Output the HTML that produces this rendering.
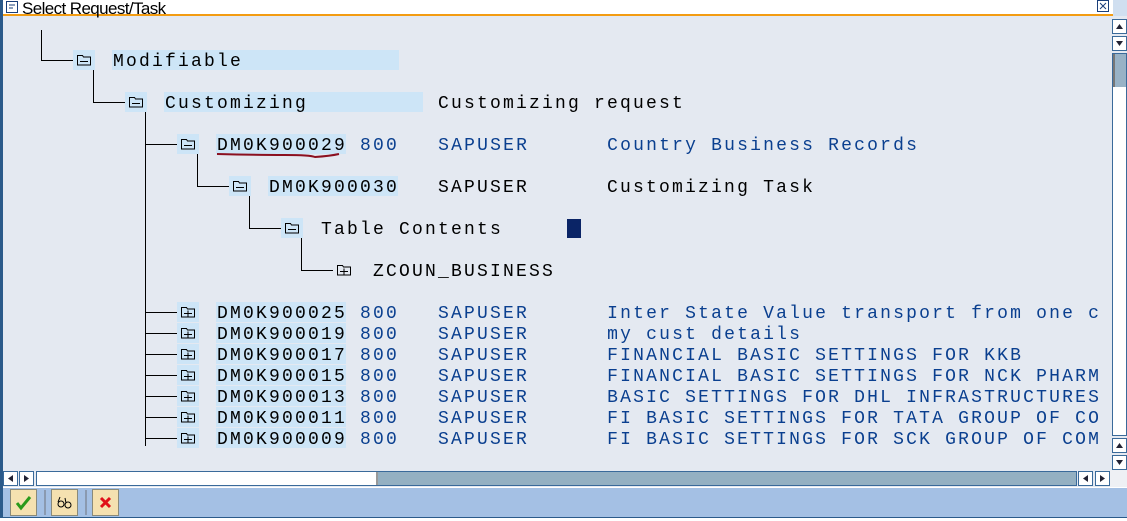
<!DOCTYPE html>
<html><head><meta charset="utf-8"><style>
*{margin:0;padding:0;box-sizing:border-box}
body{width:1127px;height:521px;overflow:hidden;background:#e4e9f1;position:relative;font-family:"Liberation Mono",monospace}
.t{position:absolute;font-size:18px;line-height:20px;letter-spacing:2.2px;white-space:pre;color:#000;margin-top:2px}
.b{color:#0a3f8f}
.hl{position:absolute;background:#cde5f7;height:20px}
.v{position:absolute;width:1px;background:#000}
.h{position:absolute;height:1px;background:#000}
.ic{position:absolute;width:22px;height:20px;background:#cde5f7}
.ic svg{position:absolute;left:3px;top:3px}
.btn{position:absolute;top:489px;width:27px;height:27px;background:#f5e1b0;border:1px solid #8a8a7a}
.sb{position:absolute;background:#fff;border:1px solid #3a6a9a}
</style></head><body>
<div style="position:absolute;left:0;top:0;width:1127px;height:16px;background:#fff"></div>
<div style="position:absolute;left:0;top:14px;width:1113px;height:2px;background:#f39c12"></div>
<div style="position:absolute;left:0;top:0;width:3px;height:521px;background:#2b5a8a"></div>
<div style="position:absolute;left:1113px;top:0;width:14px;height:16px;background:#d0dff0"></div>
<svg style="position:absolute;left:6px;top:1px" width="14" height="13"><rect x="0.5" y="0.5" width="11" height="11" fill="#fff" stroke="#1a3f7a"/><path d="M3 4h6M3 7h4" stroke="#1a3f7a"/></svg>
<div style="position:absolute;left:22px;top:-1px;font-family:'Liberation Sans',sans-serif;font-size:17px;line-height:20px;color:#000;letter-spacing:-0.6px">Select Request/Task</div>
<svg style="position:absolute;left:1097px;top:0" width="12" height="12"><rect x="0.5" y="0.5" width="11" height="11" fill="#fff" stroke="#1a3f7a"/><path d="M3 3l6 6M9 3l-6 6" stroke="#1a3f7a"/></svg>

<div class="hl" style="left:112px;top:50px;width:287px"></div>
<div class="hl" style="left:164px;top:92px;width:259px"></div>
<div class="hl" style="left:216px;top:134px;width:130px"></div>
<div class="hl" style="left:268px;top:176px;width:130px"></div>
<div class="hl" style="left:216px;top:302px;width:130px"></div>
<div class="hl" style="left:216px;top:323px;width:130px"></div>
<div class="hl" style="left:216px;top:344px;width:130px"></div>
<div class="hl" style="left:216px;top:365px;width:130px"></div>
<div class="hl" style="left:216px;top:386px;width:130px"></div>
<div class="hl" style="left:216px;top:407px;width:130px"></div>
<div class="hl" style="left:216px;top:428px;width:130px"></div>

<div class="v" style="left:41px;top:30px;height:31px"></div><div class="h" style="left:41px;top:60px;width:32px"></div>
<div class="v" style="left:93px;top:70px;height:33px"></div><div class="h" style="left:93px;top:102px;width:32px"></div>
<div class="v" style="left:145px;top:112px;height:334px"></div>
<div class="h" style="left:145px;top:144px;width:32px"></div>
<div class="v" style="left:197px;top:154px;height:33px"></div><div class="h" style="left:197px;top:186px;width:32px"></div>
<div class="v" style="left:249px;top:196px;height:33px"></div><div class="h" style="left:249px;top:228px;width:32px"></div>
<div class="v" style="left:301px;top:238px;height:33px"></div><div class="h" style="left:301px;top:270px;width:32px"></div>
<div class="h" style="left:145px;top:312px;width:32px"></div>
<div class="h" style="left:145px;top:333px;width:32px"></div>
<div class="h" style="left:145px;top:354px;width:32px"></div>
<div class="h" style="left:145px;top:375px;width:32px"></div>
<div class="h" style="left:145px;top:396px;width:32px"></div>
<div class="h" style="left:145px;top:417px;width:32px"></div>
<div class="h" style="left:145px;top:438px;width:32px"></div>

<div class="ic" style="left:73px;top:50px"><svg width="16" height="14"><path d="M1.5 2.5h5l1 1.5h7v8h-13z M4 8.5h8" fill="none" stroke="#000"/></svg></div>
<div class="ic" style="left:125px;top:92px"><svg width="16" height="14"><path d="M1.5 2.5h5l1 1.5h7v8h-13z M4 8.5h8" fill="none" stroke="#000"/></svg></div>
<div class="ic" style="left:177px;top:134px"><svg width="16" height="14"><path d="M1.5 2.5h5l1 1.5h7v8h-13z M4 8.5h8" fill="none" stroke="#000"/></svg></div>
<div class="ic" style="left:229px;top:176px"><svg width="16" height="14"><path d="M1.5 2.5h5l1 1.5h7v8h-13z M4 8.5h8" fill="none" stroke="#000"/></svg></div>
<div class="ic" style="left:281px;top:218px"><svg width="16" height="14"><path d="M1.5 2.5h5l1 1.5h7v8h-13z M4 8.5h8" fill="none" stroke="#000"/></svg></div>
<div class="ic" style="left:333px;top:260px;background:none"><svg width="16" height="14"><path d="M1.5 2.5h5l1 1.5h7v8h-13z M4 8.5h8M8 5.5v6" fill="none" stroke="#000"/></svg></div>
<div class="ic" style="left:177px;top:302px"><svg width="16" height="14"><path d="M1.5 2.5h5l1 1.5h7v8h-13z M4 8.5h8M8 5.5v6" fill="none" stroke="#000"/></svg></div>
<div class="ic" style="left:177px;top:323px"><svg width="16" height="14"><path d="M1.5 2.5h5l1 1.5h7v8h-13z M4 8.5h8M8 5.5v6" fill="none" stroke="#000"/></svg></div>
<div class="ic" style="left:177px;top:344px"><svg width="16" height="14"><path d="M1.5 2.5h5l1 1.5h7v8h-13z M4 8.5h8M8 5.5v6" fill="none" stroke="#000"/></svg></div>
<div class="ic" style="left:177px;top:365px"><svg width="16" height="14"><path d="M1.5 2.5h5l1 1.5h7v8h-13z M4 8.5h8M8 5.5v6" fill="none" stroke="#000"/></svg></div>
<div class="ic" style="left:177px;top:386px"><svg width="16" height="14"><path d="M1.5 2.5h5l1 1.5h7v8h-13z M4 8.5h8M8 5.5v6" fill="none" stroke="#000"/></svg></div>
<div class="ic" style="left:177px;top:407px"><svg width="16" height="14"><path d="M1.5 2.5h5l1 1.5h7v8h-13z M4 8.5h8M8 5.5v6" fill="none" stroke="#000"/></svg></div>
<div class="ic" style="left:177px;top:428px"><svg width="16" height="14"><path d="M1.5 2.5h5l1 1.5h7v8h-13z M4 8.5h8M8 5.5v6" fill="none" stroke="#000"/></svg></div>

<div class="t" style="left:113px;top:50px">Modifiable</div>
<div class="t" style="left:165px;top:92px">Customizing</div>
<div class="t" style="left:438px;top:92px">Customizing request</div>
<div class="t" style="left:217px;top:134px">DM0K900029 <span class="b">800</span>   <span class="b">SAPUSER</span>      <span class="b">Country Business Records</span></div>
<svg style="position:absolute;left:215px;top:151px" width="130" height="8"><path d="M2 3 Q40 4 70 4 Q95 4 100 6 Q115 5 124 3" stroke="#8b1020" stroke-width="2" fill="none"/></svg>
<div class="t" style="left:269px;top:176px">DM0K900030   SAPUSER      Customizing Task</div>
<div class="t" style="left:321px;top:218px">Table Contents</div>
<div style="position:absolute;left:567px;top:219px;width:14px;height:19px;background:#0a2466"></div>
<div class="t" style="left:373px;top:260px">ZCOUN_BUSINESS</div>
<div class="t" style="left:217px;top:302px">DM0K900025 <span class="b">800   SAPUSER      Inter State Value transport from one c</span></div>
<div class="t" style="left:217px;top:323px">DM0K900019 <span class="b">800   SAPUSER      my cust details</span></div>
<div class="t" style="left:217px;top:344px">DM0K900017 <span class="b">800   SAPUSER      FINANCIAL BASIC SETTINGS FOR KKB</span></div>
<div class="t" style="left:217px;top:365px">DM0K900015 <span class="b">800   SAPUSER      FINANCIAL BASIC SETTINGS FOR NCK PHARM</span></div>
<div class="t" style="left:217px;top:386px">DM0K900013 <span class="b">800   SAPUSER      BASIC SETTINGS FOR DHL INFRASTRUCTURES</span></div>
<div class="t" style="left:217px;top:407px">DM0K900011 <span class="b">800   SAPUSER      FI BASIC SETTINGS FOR TATA GROUP OF CO</span></div>
<div class="t" style="left:217px;top:428px">DM0K900009 <span class="b">800   SAPUSER      FI BASIC SETTINGS FOR SCK GROUP OF COM</span></div>

<div style="position:absolute;left:1110px;top:16px;width:17px;height:470px;background:#e4e9f1"></div>
<div class="sb" style="left:1112px;top:19px;width:15px;height:15px"><svg width="13" height="13"><path d="M3 9h7L6.5 4z" fill="#223"/></svg></div>
<div class="sb" style="left:1112px;top:36px;width:15px;height:15px"><svg width="13" height="13"><path d="M3 4h7L6.5 9z" fill="#223"/></svg></div>
<div class="sb" style="left:1112px;top:53px;width:15px;height:383px"></div>
<div style="position:absolute;left:1113px;top:54px;width:13px;height:33px;background:#98b2c6;border-left:2px solid #777"></div>
<div class="sb" style="left:1112px;top:438px;width:15px;height:15px"><svg width="13" height="13"><path d="M3 9h7L6.5 4z" fill="#223"/></svg></div>
<div class="sb" style="left:1112px;top:455px;width:15px;height:15px"><svg width="13" height="13"><path d="M3 4h7L6.5 9z" fill="#223"/></svg></div>
<div class="sb" style="left:3px;top:471px;width:15px;height:15px"><svg width="13" height="13"><path d="M9 3v7L4 6.5z" fill="#223"/></svg></div>
<div class="sb" style="left:19px;top:471px;width:15px;height:15px"><svg width="13" height="13"><path d="M4 3v7L9 6.5z" fill="#223"/></svg></div>
<div class="sb" style="left:36px;top:471px;width:1041px;height:15px;background:#94b0c2"></div>
<div style="position:absolute;left:37px;top:472px;width:341px;height:13px;background:#fff;border-right:2px solid #999"></div>
<div class="sb" style="left:1078px;top:471px;width:15px;height:15px"><svg width="13" height="13"><path d="M9 3v7L4 6.5z" fill="#223"/></svg></div>
<div class="sb" style="left:1095px;top:471px;width:15px;height:15px"><svg width="13" height="13"><path d="M4 3v7L9 6.5z" fill="#223"/></svg></div>
<div style="position:absolute;left:1110px;top:470px;width:17px;height:17px;background:#eef0f4"></div>
<div style="position:absolute;left:3px;top:487px;width:1124px;height:30px;background:#a4c0e4;border-top:1px solid #fff"></div>
<div style="position:absolute;left:0;top:517px;width:1127px;height:4px;background:#fff;border-top:1px solid #2b5a8a"></div>
<div class="btn" style="left:10px"><svg width="25" height="25"><path d="M6 13l4 5 9-11" stroke="#2a9a1a" stroke-width="3" fill="none"/></svg></div>
<div style="position:absolute;left:44px;top:490px;width:2px;height:25px;background:#8a9ab0"></div>
<div class="btn" style="left:51px"><svg width="25" height="25"><circle cx="9" cy="14" r="3" fill="none" stroke="#000"/><circle cx="16" cy="15" r="3" fill="none" stroke="#000"/><path d="M6 12l2-5M14 13l-1-5" stroke="#000" fill="none"/></svg></div>
<div style="position:absolute;left:85px;top:490px;width:2px;height:25px;background:#8a9ab0"></div>
<div class="btn" style="left:92px"><svg width="25" height="25"><path d="M8 8l9 9M17 8l-9 9" stroke="#e0101a" stroke-width="3"/></svg></div>
</body></html>
